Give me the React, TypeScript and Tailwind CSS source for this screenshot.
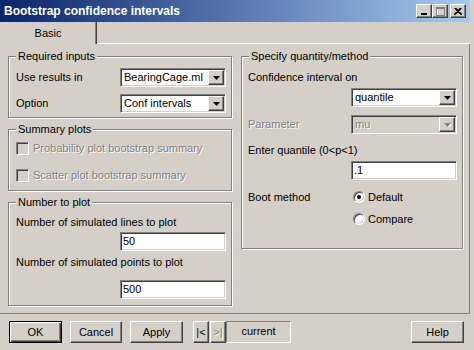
import type { ReactNode } from 'react';

const raised =
  'border border-t-white border-l-white border-r-[#404040] border-b-[#404040] shadow-[inset_-1px_-1px_0_#808080]';
const sunken =
  'border border-t-[#808080] border-l-[#808080] border-r-white border-b-white shadow-[inset_1px_1px_0_#404040,inset_-1px_-1px_0_#d4d0c8]';
const grayText = 'text-[#808080] [text-shadow:1px_1px_0_#fff]';

const Arrow = ({ disabled }: { disabled?: boolean }) => (
  <svg width="7" height="4" viewBox="0 0 7 4">
    {disabled && <polygon points="1,1 8,1 4.5,5" fill="#fff" />}
    <polygon points="0,0 7,0 3.5,4" fill={disabled ? '#808080' : '#000'} />
  </svg>
);

const Combo = ({ value, disabled }: { value: string; disabled?: boolean }) => (
  <div className={`flex h-[19px] w-[106px] items-center p-px ${sunken} ${disabled ? 'bg-[#d4d0c8]' : 'bg-white'}`}>
    <span className={`flex-1 pl-[2px] leading-none ${disabled ? grayText : ''}`}>{value}</span>
    <span className={`flex h-full w-[16px] items-center justify-center bg-[#d4d0c8] ${raised}`}>
      <Arrow disabled={disabled} />
    </span>
  </div>
);

const Field = ({ value }: { value: string }) => (
  <div className={`flex h-[19px] w-[106px] items-center bg-white pl-[2px] ${sunken}`}>{value}</div>
);

const Group = ({ title, className, children }: { title: string; className?: string; children: ReactNode }) => (
  <div className={`border border-[#808080] shadow-[1px_1px_0_#fff,inset_1px_1px_0_#fff] ${className ?? ''}`}>
    <div className="-mt-[8px] ml-[7px] w-fit bg-[#d4d0c8] px-[2px] leading-[14px]">{title}</div>
    {children}
  </div>
);

const CheckRow = ({ label, className }: { label: string; className?: string }) => (
  <div className={`flex h-[16px] items-center pl-[7px] ${className ?? ''}`}>
    <span className={`h-[13px] w-[13px] bg-[#d4d0c8] ${sunken}`} />
    <span className={`ml-[4px] ${grayText}`}>{label}</span>
  </div>
);

const Radio = ({ label, checked, className }: { label: string; checked?: boolean; className?: string }) => (
  <div className={`flex h-[16px] items-center ${className ?? ''}`}>
    <span
      className={`flex h-[12px] w-[12px] items-center justify-center rounded-full bg-white ${sunken}`}
    >
      {checked && <span className="h-[4px] w-[4px] rounded-full bg-black" />}
    </span>
    <span className="ml-[3px]">{label}</span>
  </div>
);

const Btn = ({ children, className }: { children: ReactNode; className?: string }) => (
  <div className={`flex h-[22px] items-center justify-center bg-[#d4d0c8] ${raised} ${className ?? ''}`}>
    {children}
  </div>
);

const App = () => {
  return (
    <div className="flex h-[350px] w-[474px] flex-col overflow-hidden bg-[#d4d0c8] font-['Liberation_Sans',Arial,sans-serif] text-[11px] text-black">
      {/* title bar */}
      <div className="flex h-[22px] w-[470px] shrink-0 items-center bg-[linear-gradient(to_right,#0a246a,#a6caf0)] pl-[4px] pr-[4px]">
        <span className="flex-1 text-[12px] font-bold text-white">Bootstrap confidence intervals</span>
        <div className={`flex h-[14px] w-[16px] items-end justify-center bg-[#d4d0c8] pb-[2px] ${raised}`}>
          <span className="h-[2px] w-[6px] bg-black" />
        </div>
        <div className={`flex h-[14px] w-[16px] items-center justify-center bg-[#d4d0c8] ${raised}`}>
          <svg width="9" height="9" viewBox="0 0 9 9">
            <rect x="1.5" y="1.5" width="8" height="8" fill="none" stroke="#fff" />
            <rect x="0.5" y="0.5" width="8" height="8" fill="none" stroke="#808080" />
            <line x1="0" y1="1.5" x2="9" y2="1.5" stroke="#808080" />
          </svg>
        </div>
        <div className={`ml-[2px] flex h-[14px] w-[16px] items-center justify-center bg-[#d4d0c8] ${raised}`}>
          <svg width="8" height="7" viewBox="0 0 8 7">
            <path d="M0.5 0 L7.5 7 M1.5 0 L8 6.5 M7.5 0 L0.5 7 M6.5 0 L0 6.5" stroke="#000" strokeWidth="1.1" />
          </svg>
        </div>
      </div>

      {/* tabs */}
      <div className="flex h-[22px] w-[470px] shrink-0">
        <div className="flex w-[97px] items-center justify-center border-r border-r-[#404040] shadow-[inset_-1px_0_0_#808080]">
          Basic
        </div>
        <div className="flex-1 border-b border-b-white" />
      </div>

      {/* panel */}
      <div className="flex h-[270px] w-[470px] shrink-0 border-r border-b border-r-[#808080] border-b-[#808080] pt-[12px] pl-[8px]">
        <div className="flex w-[224px] flex-col">
          <Group title="Required inputs" className="pb-[4px]">
            <div className="mt-[5px] flex h-[19px] items-center pl-[7px]">
              <span className="w-[104px]">Use results in</span>
              <Combo value="BearingCage.ml" />
            </div>
            <div className="mt-[7px] flex h-[19px] items-center pl-[7px]">
              <span className="w-[104px]">Option</span>
              <Combo value="Conf intervals" />
            </div>
          </Group>

          <Group title="Summary plots" className="mt-[11px] pb-[7px]">
            <CheckRow label="Probability plot bootstrap summary" className="mt-[4px]" />
            <CheckRow label="Scatter plot bootstrap summary" className="mt-[11px]" />
          </Group>

          <Group title="Number to plot" className="mt-[11px] pb-[6px]">
            <div className="mt-[6px] h-[14px] pl-[7px] leading-[14px]">Number of simulated lines to plot</div>
            <div className="mt-[3px] flex justify-end pr-[5px]">
              <Field value="50" />
            </div>
            <div className="mt-[4px] h-[14px] pl-[7px] leading-[14px]">Number of simulated points to plot</div>
            <div className="mt-[11px] flex justify-end pr-[5px]">
              <Field value="500" />
            </div>
          </Group>
        </div>

        <div className="ml-[9px] flex w-[222px] flex-col">
          <Group title="Specify quantity/method" className="h-[193px]">
            <div className="mt-[7px] h-[14px] pl-[6px] leading-[14px]">Confidence interval on</div>
            <div className="mt-[4px] flex justify-end pr-[5px]">
              <Combo value="quantile" />
            </div>
            <div className="mt-[8px] flex h-[19px] items-center pl-[6px]">
              <span className={`w-[103px] ${grayText}`}>Parameter</span>
              <Combo value="mu" disabled />
            </div>
            <div className="mt-[9px] h-[14px] pl-[6px] leading-[14px]">Enter quantile (0&lt;p&lt;1)</div>
            <div className="mt-[4px] flex justify-end pr-[5px]">
              <Field value=".1" />
            </div>
            <div className="mt-[9px] flex pl-[6px]">
              <span className="w-[105px] leading-[16px]">Boot method</span>
              <div className="flex flex-col">
                <Radio label="Default" checked />
                <Radio label="Compare" className="mt-[6px]" />
              </div>
            </div>
          </Group>
        </div>
      </div>

      {/* footer */}
      <div className="flex h-[36px] w-[474px] items-start pt-[7px] pl-[9px] pr-[10px]">
        <div className="flex h-[22px] w-[53px] items-center justify-center border border-black bg-[#d4d0c8] shadow-[inset_1px_1px_0_#fff,inset_-1px_-1px_0_#404040,inset_-2px_-2px_0_#808080]">
          OK
        </div>
        <Btn className="ml-[8px] w-[52px]">Cancel</Btn>
        <Btn className="ml-[8px] w-[53px]">Apply</Btn>
        <Btn className="ml-[10px] w-[16px]">|&lt;</Btn>
        <Btn className={`ml-px w-[16px] ${grayText}`}>&gt;|</Btn>
        <div className={`flex h-[22px] w-[65px] items-center justify-center pb-[2px] ${sunken} shadow-none`}>current</div>
        <Btn className="ml-auto w-[53px]">Help</Btn>
      </div>
    </div>
  );
};

export default App;
